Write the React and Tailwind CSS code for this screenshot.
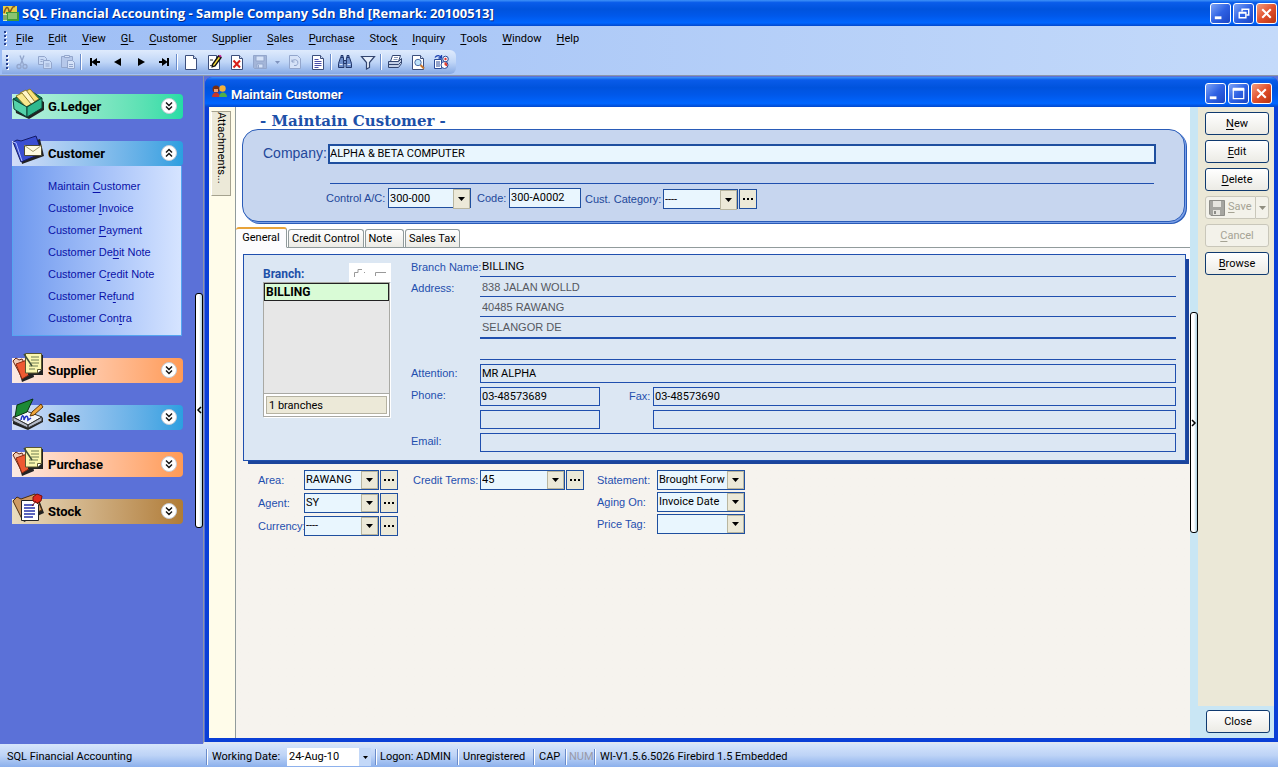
import React from "react";

const TAHOMA = "font-[Roboto,sans-serif]";
const MS_SANS = "font-['Liberation_Sans',Arial,sans-serif]";

/* Renders a caption whose accelerator letter follows an "&". */
function Accel({ text }) {
  const at = text.indexOf("&");
  if (at < 0) return text;
  return (
    <span>
      {text.slice(0, at)}
      <span className="underline underline-offset-2">{text[at + 1]}</span>
      {text.slice(at + 2)}
    </span>
  );
}

/* ---------- toolbar drawings, 16 x 16 ---------- */

const Page = ({ children }) => (
  <>
    <path d="M2.500 1.500h8l3 3v11h-11z" fill="#fff" stroke="#3c4f7c" />
    <path d="M10.500 1.500v3h3" fill="#cfdcf5" stroke="#3c4f7c" />
    {children}
  </>
);

const toolIcons = {
  cut: (
    <g fill="none" stroke="#93a6cc" strokeWidth="1.300">
      <path d="M6 1.500l3.500 9M10 1.500l-3.500 9" />
      <circle cx="5" cy="12.500" r="2" />
      <circle cx="11" cy="12.500" r="2" />
    </g>
  ),
  copy: (
    <g fill="#c9daf6" stroke="#93a6cc">
      <path d="M1.500 2.500h6l2 2v6h-8z" />
      <path d="M6.500 6.500h6l2 2v6h-8z" />
      <path d="M8.500 10h4M8.500 12h4M3.500 5.500h3M3.500 7.500h2" />
    </g>
  ),
  paste: (
    <g fill="#b6c8ea" stroke="#93a6cc">
      <path d="M1.500 2.500h11v11h-11z" />
      <path d="M4.500 1.500h5v2h-5z" fill="#d5e2f8" />
      <path d="M7.500 6.500h5l2 2v6h-7z" fill="#d5e2f8" />
      <path d="M9 10.500h4M9 12.500h4" />
    </g>
  ),
  first: <path d="M3 4h2v3.500L10 4v3h3v2h-3v3L5 8.500V12H3z" fill="#000" />,
  prev: <path d="M4 8l7-4v8z" fill="#000" />,
  next: <path d="M12 8L5 4v8z" fill="#000" />,
  last: <path d="M13 4h-2v3.500L6 4v3H3v2h3v3l5-3.500V12h2z" fill="#000" />,
  blank: <Page />,
  edit: (
    <Page>
      <path d="M4 12c2-2 2 2 4 0M4 6h3" stroke="#222" fill="none" />
      <path d="M6.500 10.500L12.500 2l2.500 1.600-6 8.400-2.800.8z" fill="#f5d93a" stroke="#111" strokeWidth="1.400" />
      <path d="M12.500 2l2.500 1.600.6-1.600-1.600-1.200z" fill="#c21c8c" />
    </Page>
  ),
  remove: (
    <Page>
      <path d="M4.500 6.500l6.500 7M11 6.500l-6.500 7" stroke="#d9201a" strokeWidth="2" />
    </Page>
  ),
  save: (
    <g fill="#a3b5d8" stroke="#93a6cc">
      <path d="M1.500 1.500h13v13h-12l-1-1z" />
      <path d="M4 2h8v5H4zM5 10h6v4H5z" fill="#d5e2f8" />
      <path d="M6.500 11v3" />
    </g>
  ),
  refresh: (
    <g fill="#d5e2f8" stroke="#93a6cc">
      <path d="M2.500 1.500h8l3 3v10h-11z" />
      <path d="M5 8a3 3 0 1 1 2 3.500M5 5.500V8h2.500" fill="none" />
    </g>
  ),
  lines: (
    <Page>
      <path d="M4.500 5.500h4M4.500 7.500h7M4.500 9.500h7M4.500 11.500h7M4.500 13.500h4" stroke="#4a4fa8" />
    </Page>
  ),
  find: (
    <g fill="#6f8fcb" stroke="#22376b">
      <path d="M3.500 3.500h3v3l.5 7h-5.500v-4z" />
      <path d="M9.500 3.500h3l2 6v4H9z" />
      <path d="M6.500 6.500h3v3h-3z" />
      <path d="M4 1.500h2v2H4zM10 1.500h2v2h-2z" />
      <path d="M2.500 10.500h3M10.500 10.500h3" stroke="#dfe9fb" />
    </g>
  ),
  filter: <path d="M1.500 2.500h13L9.500 8.500v5l-3 1.500V8.500z" fill="#e6effc" stroke="#33456f" strokeWidth="1.200" />,
  print: (
    <g stroke="#33456f">
      <path d="M5.500 1.500h8l-2 6h-8z" fill="#fff" />
      <path d="M1.500 7.500h10l3-3v5l-3 4h-10z" fill="#c3cfe6" />
      <path d="M1.500 10.500h10l3-3" fill="none" />
      <path d="M7 3.500h4M6.500 5.500h4" stroke="#8797b8" />
    </g>
  ),
  preview: (
    <Page>
      <circle cx="8" cy="8.500" r="3.200" fill="#bfe3fa" stroke="#4d6ea8" />
      <path d="M10.500 11l3.500 3.500" stroke="#c8752b" strokeWidth="2" />
    </Page>
  ),
  report: (
    <g>
      <path d="M1.500 5.500h7v9h-7z" fill="#fff" stroke="#2a4a96" />
      <path d="M3 8h4M3 10h4M3 12h4" stroke="#2a4a96" />
      <path d="M2 3.500c2-3 5-2 6 0M8.500 1v3h-3" fill="none" stroke="#1a3fae" strokeWidth="1.300" />
      <circle cx="12.500" cy="5" r="2.800" fill="#fff" stroke="#2a4a96" />
      <circle cx="12.500" cy="5" r="1.200" fill="#d33" />
      <circle cx="11.500" cy="11" r="3.500" fill="#fff" stroke="#2a4a96" />
      <path d="M11.500 11V8a3 3 0 0 1 2.500 4.500z" fill="#e03a2d" />
    </g>
  ),
};

function ToolButton({ icon, label }) {
  return (
    <button aria-label={label} className="flex h-6 w-[23px] items-center justify-center">
      <svg width="16" height="16" viewBox="0 0 16 16">{toolIcons[icon]}</svg>
    </button>
  );
}

const Divider = () => <span className="mx-px h-4 w-[2px] border-l border-[#6a8ccb] border-r border-r-white" />;

const Grip = () => (
  <svg width="4" height="16" viewBox="0 0 4 16" className="ml-1">
    {[1, 5, 9, 13].map((y) => (
      <g key={y}>
        <rect x="1" y={y + 1} width="2" height="2" fill="#fff" />
        <rect x="0" y={y} width="2" height="2" fill="#27418f" />
      </g>
    ))}
  </svg>
);

/* ---------- sidebar drawings, 32 x 32 ---------- */

const notePaper = (
  <>
    <path d="M5 14l14-4 3 16-12 5z" fill="#222" />
    <path d="M1 10l3-3 3 2 3-1 8 14-8 5z" fill="#f1cdb8" stroke="#6b2a14" />
    <path d="M4 13l11-4 5 13-10 6z" fill="#ee5a32" stroke="#8c2a12" />
    <path d="M16 4h15v20H16z" fill="#222" />
    <path d="M13.500 2.500h16v16l-4 3.500h-12z" fill="#fbf7b0" stroke="#5a5630" />
    <path d="M25.500 22v-3.500h4" fill="#fff" stroke="#5a5630" />
    <path d="M19 6h8M19 9h8M19 12h8M17 15h9M17 18h6" stroke="#6e7c50" />
    <path d="M12 3l8 12" stroke="#3f4e3a" strokeWidth="1.500" />
  </>
);

const groupIcons = {
  ledger: (
    <>
      <path d="M3 17l17-9 12 7v8l-15 9L4 26z" fill="#222" />
      <path d="M1 12l18-8 11 7-15 9z" fill="#0e7a5c" stroke="#0a4435" />
      <path d="M12 5l6-3 9 10-7 4z" fill="#f9e27a" stroke="#8a7a2a" />
      <path d="M8 6l6-3 9 12-6 3z" fill="#fff5c9" stroke="#8a7a2a" />
      <path d="M4 9l6-3 9 11-5 3z" fill="#f9e88e" stroke="#8a7a2a" />
      <path d="M1 12l14 8v10L2 22z" fill="#54d2aa" stroke="#0a4435" />
      <path d="M15 20l15-9v10l-15 9z" fill="#2fb98e" stroke="#0a4435" />
    </>
  ),
  customer: (
    <>
      <path d="M8 12l20-7 4 17-22 8z" fill="#222" />
      <path d="M1 8l4-2 4 1 15-5 6 17-21 9z" fill="#3b4fd2" stroke="#131a66" />
      <path d="M1 8l3 1 6 18" fill="none" stroke="#aebcff" />
      <path d="M12.500 11.500h17v10h-17z" fill="#fffbe0" stroke="#4d4a35" />
      <path d="M12.500 11.500l8.500 6 8.500-6" fill="none" stroke="#a59b6a" />
    </>
  ),
  note: notePaper,
  sales: (
    <>
      <path d="M1 22l14-7 16 5v4l-15 8L1 26z" fill="#222" />
      <path d="M1 19l13-6 16 6-14 8z" fill="#f4f6fb" stroke="#333" />
      <path d="M1 19l15 8v3L1 23zM16 27l14-8v4l-14 7z" fill="#b6bccb" stroke="#333" />
      <path d="M5 7l16-6-6 13-12 5z" fill="#1c8a35" stroke="#07310f" />
      <path d="M9 22c1-6 3-5 3 0 2-6 4-4 4 0l3-2" fill="none" stroke="#2134c4" strokeWidth="1.500" />
      <path d="M18 18l2-4 9-8 2 3-9 8z" fill="#f0a63c" stroke="#5b3408" />
    </>
  ),
  stock: (
    <>
      <path d="M4 10l22-5 6 16-20 9z" fill="#222" />
      <path d="M1 9l4-4 4 2 14-5 7 16-20 9z" fill="#cf9a63" stroke="#4b2c0d" />
      <path d="M9.500 8.500h13l4 4v16h-17z" fill="#fff" stroke="#222" />
      <path d="M12 13h10M12 16h11M12 19h11M12 22h11M12 25h9" stroke="#2431a8" strokeWidth="1.500" />
      <path d="M21 5l4-3 5 2-1 5-4 2-4-2zM24 9l-4 5" fill="#e0281e" stroke="#7c0d08" />
    </>
  ),
};

const groups = [
  { name: "G.Ledger", icon: "ledger", bar: "from-[#b9f0e0] to-[#23dca6]" },
  {
    name: "Customer",
    icon: "customer",
    bar: "from-[#d3ddf8] to-[#2b9fe0]",
    items: [
      "Maintain &Customer",
      "Customer &Invoice",
      "Customer &Payment",
      "Customer De&bit Note",
      "Customer C&redit Note",
      "Customer Re&fund",
      "Customer Con&tra",
    ],
  },
  { name: "Supplier", icon: "note", bar: "from-[#fbeae4] to-[#ff9a55]" },
  { name: "Sales", icon: "sales", bar: "from-[#d3ddf8] to-[#2b9fe0]" },
  { name: "Purchase", icon: "note", bar: "from-[#fbeae4] to-[#ff9a55]" },
  { name: "Stock", icon: "stock", bar: "from-[#e9dcc0] to-[#b07c36]" },
];

function Group({ group }) {
  return (
    <section>
      <button className={`flex h-[25px] w-full items-center rounded-r-sm bg-linear-to-r pr-[6px] ${group.bar}`}>
        <svg width="32" height="32" viewBox="0 0 32 32" className="-mt-2 shrink-0">{groupIcons[group.icon]}</svg>
        <span className={`${TAHOMA} ml-1 flex-1 text-left text-[13px] font-bold text-black`}>{group.name}</span>
        <svg width="16" height="16" viewBox="0 0 16 16" className="mb-[2px]">
          <circle cx="8" cy="8" r="7.500" fill="#fff" stroke="#c8cdd6" />
          <path
            d={group.items ? "M5 7.500l3-3 3 3M5 11.500l3-3 3 3" : "M5 4.500l3 3 3-3M5 8.500l3 3 3-3"}
            fill="none"
            stroke="#111"
            strokeWidth="1.400"
          />
        </svg>
      </button>
      {group.items && (
        <ul className={`${MS_SANS} mr-px border border-t-0 border-[#55a5f0] bg-linear-to-r from-[#6f98ee] to-[#d6e4ff] pt-[9px] pb-[6px] pl-[35px] text-[11px] text-[#0a12a8]`}>
          {group.items.map((item) => (
            <li key={item} className="flex h-[22px] items-center">
              <a href="#"><Accel text={item} /></a>
            </li>
          ))}
        </ul>
      )}
    </section>
  );
}

/* ---------- window chrome ---------- */

const captionGlyphs = {
  minimize: <rect x="4" y="13" width="7" height="3" fill="#fff" />,
  restore: (
    <g fill="none" stroke="#fff" strokeWidth="1.500">
      <path d="M8.500 8V5.500h7v6H13" />
      <path d="M5.500 9.500h7v5h-7zM5 9h8" />
    </g>
  ),
  maximize: (
    <g fill="none" stroke="#fff">
      <path d="M4.500 5.500h11v10h-11z" strokeWidth="1.300" />
      <path d="M4 5.500h12" strokeWidth="3" />
    </g>
  ),
  close: <path d="M5.500 5.500l9 9M14.500 5.500l-9 9" stroke="#fff" strokeWidth="2.200" />,
};

function CaptionButtons({ middle }) {
  return (
    <div className="flex gap-[2px]">
      {["minimize", middle, "close"].map((kind) => (
        <button
          key={kind}
          aria-label={kind}
          className={`h-[21px] w-[21px] overflow-hidden rounded-[3px] border border-white bg-linear-to-br ${
            kind === "close" ? "from-[#f09a7c] via-[#e2502c] to-[#b8340f]" : "from-[#7ea2f5] via-[#2f62e4] to-[#1c45c4]"
          }`}
        >
          <svg width="19" height="19" viewBox="0 0 20 20">{captionGlyphs[kind]}</svg>
        </button>
      ))}
    </div>
  );
}

const TITLE_BG =
  "bg-[linear-gradient(180deg,#3f92f8_0%,#0a5cea_10%,#0053dd_35%,#0058ea_60%,#0066ff_88%,#0348cc_100%)]";

/* ---------- form controls ---------- */

const FIELD = `${TAHOMA} min-w-0 border border-[#1f4f9f] text-[11px] text-black outline-none`;

function Combo({ id, options, className }) {
  return (
    <span className={`grid h-5 shrink-0 border border-[#1f4f9f] bg-[#e9f6fe] ${className}`}>
      <select
        id={id}
        className={`${TAHOMA} col-start-1 row-start-1 min-w-0 appearance-none truncate pr-4 pl-px text-[11px] text-black outline-none`}
      >
        {options.map((o) => (
          <option key={o}>{o}</option>
        ))}
      </select>
      <span className="pointer-events-none col-start-1 row-start-1 flex w-[17px] items-center justify-center justify-self-end border border-[#b9b6a0] bg-[#ece9d8]">
        <svg width="7" height="4" viewBox="0 0 7 4"><path d="M0 0h7L3.500 4z" fill="#000" /></svg>
      </span>
    </span>
  );
}

function MoreButton({ label }) {
  return (
    <button aria-label={label} className="ml-px flex h-5 w-[18px] shrink-0 items-center justify-center border border-[#1f4f9f] bg-[#ece9d8]">
      <svg width="10" height="2" viewBox="0 0 10 2">
        <path d="M0 0h2v2H0zM4 0h2v2H4zM8 0h2v2H8z" fill="#000" />
      </svg>
    </button>
  );
}

function LookupRow({ id, label, value, labelClass, comboClass }) {
  return (
    <div className="flex h-5 items-center">
      <label htmlFor={id} className={`shrink-0 ${labelClass}`}>{label}</label>
      <Combo id={id} options={[value]} className={comboClass} />
      <MoreButton label={`Look up ${label}`} />
    </div>
  );
}

function ChoiceRow({ id, label, value }) {
  return (
    <div className="flex h-5 items-center">
      <label htmlFor={id} className="w-[60px] shrink-0">{label}</label>
      <Combo id={id} options={[value]} className="w-[88px]" />
    </div>
  );
}

function ActionButton({ text }) {
  return (
    <button className="h-[23px] w-full rounded-[3px] border border-[#0f3a6f] bg-linear-to-b from-white to-[#ecebe5] pt-px text-black">
      <Accel text={text} />
    </button>
  );
}

const LINE_INPUT = `${MS_SANS} block w-full border-b border-[#1f4fae] pl-[2px] text-[11px] outline-none`;
const BOX_INPUT = `${TAHOMA} block h-[19px] border border-[#1f4fae] pl-px text-[11px] text-black outline-none`;

function Splitter({ arrow, height }) {
  return (
    <div className={`flex w-2 items-center rounded-[3px] border border-black bg-linear-to-r from-white via-white to-[#a9cfe0] ${height}`}>
      <svg width="6" height="8" viewBox="0 0 6 8">
        <path d={arrow === "left" ? "M5 1L2 4l3 3" : "M1 1l3 3-3 3"} fill="none" stroke="#000" strokeWidth="1.500" />
      </svg>
    </div>
  );
}

function CustomerHeader() {
  return (
    <header className="bg-white pr-[5px] pb-[5px] pl-[6px]">
      <h1 className="h-[22px] pt-[5px] pl-[18px] font-['DejaVu_Serif',serif] text-[15px] leading-[18px] font-bold text-[#1d50a8]">
        - Maintain Customer -
      </h1>
      <div className={`${MS_SANS} h-[93px] rounded-[16px] border border-[#2a5cb8] bg-[#c7d6ef] pt-[13px] pr-7 pl-5 text-[11px] text-[#23489a] shadow-[1px_1px_0_#7ba0e8,2px_2px_0_#2a5cb8]`}>
        <div className="flex items-center">
          <label htmlFor="company" className="w-[65px] shrink-0 text-[14px]">Company:</label>
          <input
            id="company"
            defaultValue="ALPHA & BETA COMPUTER"
            className={`${TAHOMA} h-5 min-w-0 flex-1 border-2 border-[#1f4f9f] bg-[#e9f6fe] text-[11px] text-black outline-none`}
          />
        </div>
        <input aria-label="Company second name" className="ml-[67px] block h-5 w-[calc(100%-69px)] border-b border-[#1f4fae] outline-none" />
        <div className="mt-1 flex items-start whitespace-nowrap pl-[63px] leading-5">
          <label htmlFor="control" className="w-[62px] shrink-0">Control A/C:</label>
          <Combo id="control" options={["300-000"]} className="w-[83px]" />
          <label htmlFor="code" className="ml-[6px] w-8 shrink-0">Code:</label>
          <input id="code" defaultValue="300-A0002" className={`${FIELD} h-5 w-[72px] bg-[#e9f6fe] pl-px`} />
          <div className="flex pt-px">
            <label htmlFor="category" className="ml-1 w-[78px] shrink-0">Cust. Category:</label>
            <Combo id="category" options={["----"]} className="w-[75px]" />
            <MoreButton label="Look up category" />
          </div>
        </div>
      </div>
    </header>
  );
}

function TabStrip() {
  const rest = ["Credit Control", "Note", "Sales Tax"];
  return (
    <div role="tablist" className={`${TAHOMA} flex items-end gap-px border-b border-[#919b9c] bg-white text-[11px] text-black`}>
      <button role="tab" aria-selected="true" className="-mb-px h-[21px] w-[51px] rounded-t-[3px] border border-t-2 border-l-0 border-[#919b9c] border-t-[#e8a33a] border-b-[#fcfcfe] bg-[#fcfcfe]">
        General
      </button>
      {rest.map((t) => (
        <button key={t} role="tab" aria-selected="false" className="h-[18px] rounded-t-[3px] border border-b-0 border-[#919b9c] bg-linear-to-b from-white to-[#ecebe6] px-[3px] pt-px nth-[3]:pr-[11px]">
          {t}
        </button>
      ))}
    </div>
  );
}

function BranchList() {
  return (
    <div className="w-[128px] shrink-0">
      <div className="flex h-[19px] justify-between">
        <span className={`${TAHOMA} pt-[2px] text-[12px] font-bold text-[#1d50a8]`}>Branch:</span>
        <span className="flex bg-white">
          <button aria-label="Add branch" className="w-[21px]">
            <svg width="21" height="18" viewBox="0 0 21 18" fill="none" stroke="#999">
              <path d="M5.500 13V8.500H9V5.500h4M15 8.500h1" />
            </svg>
          </button>
          <button aria-label="Remove branch" className="w-[21px]">
            <svg width="21" height="18" viewBox="0 0 21 18" fill="none" stroke="#999">
              <path d="M5.500 12V8.500H16" />
            </svg>
          </button>
        </span>
      </div>
      <div className="mr-px flex h-[135px] flex-col border border-[#a9a9a4] bg-[#e7e7e7] shadow-[1px_1px_0_#fff]">
        <div className={`${TAHOMA} flex h-[18px] items-center border border-[#222] bg-[#d9fbd6] pl-px text-[12px] font-bold text-black`}>BILLING</div>
        <div className="flex-1" />
        <div className="border-t border-[#a9a9a4] bg-white p-[2px]">
          <div className={`${TAHOMA} flex h-[18px] items-center border border-[#b5b2a2] bg-[#ece9d8] pt-[2px] pl-[2px] text-[11px] text-black`}>1 branches</div>
        </div>
      </div>
    </div>
  );
}

function BranchPanel() {
  return (
    <div className={`${MS_SANS} flex border border-[#1f4fae] bg-[#dce7f3] pr-[9px] pb-2 pl-[19px] text-[11px] text-[#1f4fae] shadow-[4px_4px_0_-1px_#1b449c]`}>
      <div className="pt-2"><BranchList /></div>
      <div className="ml-5 grid flex-1 grid-cols-[69px_minmax(0,1fr)]">
        <label htmlFor="branch" className="pt-1 whitespace-nowrap">Branch Name:</label>
        <input id="branch" defaultValue="BILLING" className={`${LINE_INPUT} h-[22px] text-black`} />
        <label htmlFor="address" className="pt-[3px]">Address:</label>
        <div className="text-[#55585f]">
          <input id="address" defaultValue="838 JALAN WOLLD" className={`${LINE_INPUT} h-5`} />
          <input aria-label="Address line 2" defaultValue="40485 RAWANG" className={`${LINE_INPUT} h-5`} />
          <input aria-label="Address line 3" defaultValue="SELANGOR DE" className={`${LINE_INPUT} h-[22px] border-b-2`} />
          <input aria-label="Address line 4" className={`${LINE_INPUT} h-[21px]`} />
        </div>
        <label htmlFor="attention" className="mt-1 pt-px">Attention:</label>
        <input id="attention" defaultValue="MR ALPHA" className={`${BOX_INPUT} mt-1`} />
        <label htmlFor="phone" className="mt-1">Phone:</label>
        <div className="mt-1 flex">
          <input id="phone" defaultValue="03-48573689" className={`${BOX_INPUT} w-[120px]`} />
          <label htmlFor="fax" className="w-[53px] shrink-0 pt-px pl-[29px]">Fax:</label>
          <input id="fax" defaultValue="03-48573690" className={`${BOX_INPUT} min-w-0 flex-1`} />
        </div>
        <div className="col-start-2 mt-1 flex">
          <input aria-label="Phone 2" className={`${BOX_INPUT} mr-[53px] w-[120px]`} />
          <input aria-label="Fax 2" className={`${BOX_INPUT} min-w-0 flex-1`} />
        </div>
        <label htmlFor="email" className="mt-1">Email:</label>
        <input id="email" className={`${BOX_INPUT} mt-1`} />
      </div>
    </div>
  );
}

function CustomerForm() {
  return (
    <main className="flex min-w-0 flex-1 flex-col border-l border-[#919b9c]">
      <CustomerHeader />
      <TabStrip />
      <div className="flex-1 bg-[#f6f3ee] bg-linear-to-b from-[#fcfcfe] to-[#f6f3ee] to-40% pt-[6px] pr-1 pl-[7px]">
        <BranchPanel />
        <div className={`${MS_SANS} flex items-start pt-[9px] pl-[15px] text-[11px] text-[#1f4fae]`}>
          <div className="flex flex-col gap-[3px]">
            <LookupRow id="area" label="Area:" value="RAWANG" labelClass="w-[46px]" comboClass="w-[75px]" />
            <LookupRow id="agent" label="Agent:" value="SY" labelClass="w-[46px]" comboClass="w-[75px]" />
            <LookupRow id="currency" label="Currency:" value="----" labelClass="w-[46px]" comboClass="w-[75px]" />
          </div>
          <div className="ml-[15px]">
            <LookupRow id="terms" label="Credit Terms:" value="45" labelClass="w-[67px]" comboClass="w-[85px]" />
          </div>
          <div className="ml-[13px] flex flex-col gap-[2px]">
            <ChoiceRow id="statement" label="Statement:" value="Brought Forw" />
            <ChoiceRow id="aging" label="Aging On:" value="Invoice Date" />
            <ChoiceRow id="price" label="Price Tag:" value="" />
          </div>
        </div>
      </div>
    </main>
  );
}

function ActionPanel() {
  return (
    <aside className={`${TAHOMA} flex w-[76px] flex-col bg-[#c9e6f4] text-[11px]`}>
      <div className="flex flex-1 flex-col gap-[5px] bg-[#ebe8d7] pt-[5px] pr-[5px] pl-[7px]">
        <ActionButton text="&New" />
        <ActionButton text="&Edit" />
        <ActionButton text="&Delete" />
        <div className="flex h-[23px] text-[#a5a394]">
          <button disabled className="flex flex-1 items-center gap-[3px] rounded-l-[3px] border border-[#c9c7ba] bg-[#f3f2ea] pl-[3px]">
            <svg width="16" height="16" viewBox="0 0 16 16">
              <path d="M.5.500h15v15H2L.500 14z" fill="#a5a5a0" stroke="#8d8d88" />
              <path d="M4 1h8v6H4zM4 10h7v5H4z" fill="#e6e5df" />
              <path d="M5 11h2v3H5z" fill="#8d8d88" />
            </svg>
            <Accel text="&Save" />
          </button>
          <button disabled aria-label="Save options" className="flex w-[13px] items-center justify-center rounded-r-[3px] border border-l-0 border-[#c9c7ba] bg-[#f3f2ea]">
            <svg width="7" height="4" viewBox="0 0 7 4"><path d="M0 0h7L3.500 4z" fill="#908e80" /></svg>
          </button>
        </div>
        <button disabled className="h-[23px] rounded-[3px] border border-[#c9c7ba] bg-[#f3f2ea] pt-px text-[#a5a394]">
          <Accel text="&Cancel" />
        </button>
        <ActionButton text="&Browse" />
      </div>
      <div className="h-8 pt-1 pr-1 pl-2"><ActionButton text="Close" /></div>
    </aside>
  );
}

function CustomerWindow() {
  return (
    <div className="flex min-w-0 flex-1 flex-col rounded-t-[7px] bg-[#0a3fd6]">
      <div className={`flex h-[30px] items-center rounded-t-[7px] pr-[6px] pl-[6px] ${TITLE_BG}`}>
        <svg width="16" height="16" viewBox="0 0 16 16">
          <circle cx="5" cy="5" r="3.500" fill="#7a2d10" />
          <path d="M1 13c0-6 8-6 8 0z" fill="#c8362a" />
          <circle cx="11.500" cy="4.500" r="3.200" fill="#f3b13a" />
          <path d="M8 13c0-6 8-6 8 0z" fill="#4fae4a" />
          <path d="M3 5h4v3H3z" fill="#f0a070" />
        </svg>
        <span className={`${TAHOMA} flex-1 pt-[5px] pl-1 text-[13px] font-bold text-white [text-shadow:1px_1px_#0a2a80]`}>Maintain Customer</span>
        <div className="pt-[3px]"><CaptionButtons middle="maximize" /></div>
      </div>
      <div className="mr-1 mb-1 ml-1 flex flex-1">
        <div className="w-[26px] bg-[#fffcea] pt-1 pl-[2px]">
          <button className={`${TAHOMA} flex h-[85px] w-5 items-center border border-[#a5a28f] border-l-[#fff] bg-[#ece9d8] text-[11px] text-black [writing-mode:vertical-rl]`}>
            Attachments...
          </button>
        </div>
        <CustomerForm />
        <div className="flex w-2 flex-col justify-center bg-[#c9e6f4]">
          <Splitter arrow="right" height="h-[221px]" />
        </div>
        <ActionPanel />
      </div>
    </div>
  );
}

const menus = ["&File", "&Edit", "&View", "&GL", "&Customer", "S&upplier", "&Sales", "&Purchase", "Stoc&k", "&Inquiry", "&Tools", "&Window", "&Help"];

const StatusDivider = () => <span className="h-4 w-[2px] border-l border-[#6a8ccb] border-r border-r-white" />;

export default function App() {
  return (
    <div className={`${TAHOMA} flex min-h-screen flex-col overflow-hidden bg-[#5b71d8] text-[11px] text-black`}>
      <div className={`flex h-[26px] items-center pr-px pl-[2px] ${TITLE_BG}`}>
        <svg width="17" height="17" viewBox="0 0 17 17">
          <path d="M1 1h14v8H1z" fill="#e8cf4a" />
          <path d="M2 8c2-7 4-7 5-2s3-7 6-4" fill="none" stroke="#8a5a1c" strokeWidth="1.500" />
          <path d="M4 7h13v9H4z" fill="#3f9a3a" />
          <path d="M6 9h9M6 11h9M6 13h9" stroke="#d7f0a8" />
          <path d="M1 9h4v7H1z" fill="#cfe9b0" />
          <path d="M2 10v5M4 10v5" stroke="#2f6a2c" />
        </svg>
        <span className="flex-1 pt-px pl-[3px] font-['Open_Sans',sans-serif] text-[13px] font-bold text-white [text-shadow:1px_1px_#0a2a80]">
          SQL Financial Accounting - Sample Company Sdn Bhd [Remark: 20100513]
        </span>
        <CaptionButtons middle="restore" />
      </div>

      <div className="border-b border-[#8c96a8] bg-linear-to-r from-[#9ebef5] to-[#c4dafa] pb-px">
        <nav className="flex h-6 items-center">
          <Grip />
          <div className="flex gap-[15px] pt-[2px] pl-2">
            {menus.map((m) => (
              <button key={m}><Accel text={m} /></button>
            ))}
          </div>
        </nav>
        <div className="ml-[2px] flex h-6 w-max items-center rounded-r-md bg-linear-to-b from-[#dfebfd] via-[#c0d6f7] to-[#86a9e4] pr-1">
          <Grip />
          <ToolButton icon="cut" label="Cut" />
          <ToolButton icon="copy" label="Copy" />
          <ToolButton icon="paste" label="Paste" />
          <Divider />
          <ToolButton icon="first" label="First" />
          <ToolButton icon="prev" label="Previous" />
          <ToolButton icon="next" label="Next" />
          <ToolButton icon="last" label="Last" />
          <Divider />
          <ToolButton icon="blank" label="New" />
          <ToolButton icon="edit" label="Edit" />
          <ToolButton icon="remove" label="Delete" />
          <ToolButton icon="save" label="Save" />
          <button aria-label="Save options" className="flex h-6 w-3 items-center justify-center">
            <svg width="5" height="3" viewBox="0 0 5 3"><path d="M0 0h5L2.500 3z" fill="#7f93bd" /></svg>
          </button>
          <ToolButton icon="refresh" label="Refresh" />
          <ToolButton icon="lines" label="Details" />
          <Divider />
          <ToolButton icon="find" label="Find" />
          <ToolButton icon="filter" label="Filter" />
          <Divider />
          <ToolButton icon="print" label="Print" />
          <ToolButton icon="preview" label="Preview" />
          <ToolButton icon="report" label="Reports" />
        </div>
      </div>

      <div className="flex flex-1">
        <aside className="flex w-[203px] shrink-0">
          <div className="flex flex-1 flex-col gap-[22px] pt-[18px] pr-3 pl-3">
            {groups.map((g) => (
              <Group key={g.name} group={g} />
            ))}
          </div>
          <div className="flex flex-col justify-center">
            <Splitter arrow="left" height="h-[235px]" />
          </div>
        </aside>
        <div className="flex min-w-0 flex-1 border-b-2 border-l border-[#dfe6f2] border-l-[#8c96a8] bg-[#5b71d8] pt-px pl-px">
          <CustomerWindow />
        </div>
      </div>

      <footer className="flex h-[23px] items-center bg-linear-to-b from-[#d6e5fb] via-[#bdd3f6] to-[#8cb0ec] pt-[3px]">
        <span className="w-[206px] pl-[7px]">SQL Financial Accounting</span>
        <StatusDivider />
        <label htmlFor="workdate" className="w-[79px] pl-1">Working Date:</label>
        <span className="grid h-[18px] w-[84px] bg-white">
          <select id="workdate" className="col-start-1 row-start-1 appearance-none pl-[2px] outline-none">
            <option>24-Aug-10</option>
          </select>
          <span className="pointer-events-none col-start-1 row-start-1 flex w-3 items-center justify-center justify-self-end bg-[#c3d8f8]">
            <svg width="5" height="3" viewBox="0 0 5 3"><path d="M0 0h5L2.500 3z" fill="#000" /></svg>
          </span>
        </span>
        <span className="w-1" />
        <StatusDivider />
        <span className="w-[80px] pl-[3px]">Logon: ADMIN</span>
        <StatusDivider />
        <span className="w-[74px] pl-1">Unregistered</span>
        <StatusDivider />
        <span className="w-[30px] pl-1">CAP</span>
        <StatusDivider />
        <span className="w-[27px] pl-[2px] text-[#9a9aa8]">NUM</span>
        <StatusDivider />
        <span className="pl-1">WI-V1.5.6.5026 Firebird 1.5 Embedded</span>
      </footer>
    </div>
  );
}
